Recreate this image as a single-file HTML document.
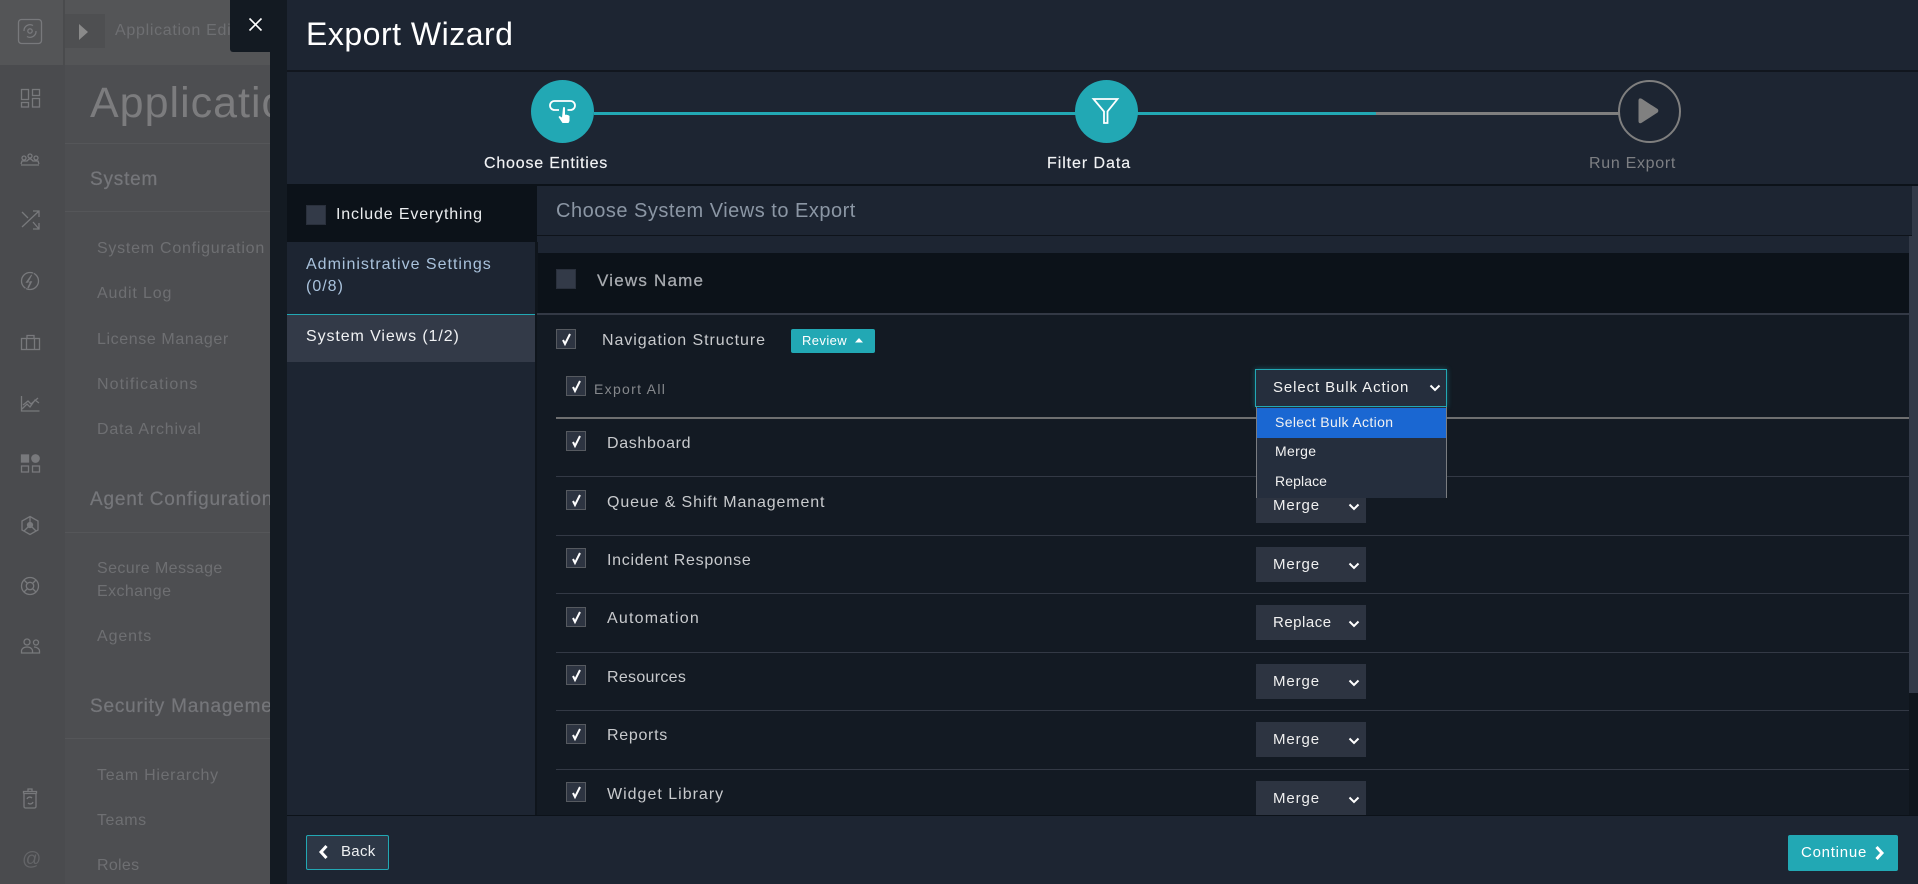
<!DOCTYPE html>
<html lang="en"><head><meta charset="utf-8"><title>Export Wizard</title>
<style>
html,body{margin:0;padding:0;width:1918px;height:884px;overflow:hidden;background:#1d2532}
body{position:relative;font-family:"Liberation Sans",sans-serif;font-size:16px;letter-spacing:.85px;color:#d9dbde}
div,span.t,svg.a{position:absolute}
.t{position:absolute;white-space:nowrap;line-height:20px;margin-top:1px}
.bg{color:#6e6f72;letter-spacing:.7px}
.h{color:#75767a;font-size:19px;letter-spacing:.8px;left:90px;-webkit-text-stroke:.25px #75767a}
.l{left:97px}
.ln{background:#555659;height:1px;left:65px;width:205px}
.cb{width:18px;height:18px;background:#2d3441;border:1px solid #565a60}
.cb svg{position:absolute;left:3px;top:2px}
.e{background:#333a48;border-color:#2a303c}
.row{left:607px;color:#c8cacd}
.sep{left:556px;width:1353px;height:1px;background:#333945}
.sel{left:1256px;width:110px;height:35px;background:#2d3441}
.sel .t{left:17px;top:7px;font-size:15px;color:#f0f0f0;letter-spacing:.9px}
.sel svg{position:absolute;left:92px;top:15px}
.opt{left:1275px;font-size:14px;letter-spacing:.35px;color:#f2f2f2}
.lab{font-size:16px;color:#f2f3f5;-webkit-text-stroke:.15px}
</style></head><body>

<!-- dimmed application behind -->
<div style="left:0;top:0;width:270px;height:884px;background:#4d4e51;overflow:hidden">
  <div style="left:0;top:0;width:65px;height:884px;background:#4a4b4e"></div>
  <div style="left:0;top:0;width:270px;height:65px;background:#545557"></div>
  <div style="left:63px;top:0;width:2px;height:65px;background:#4a4b4d"></div>
  <div style="left:65px;top:14px;width:40px;height:34px;background:#4e4f51"></div>
  <svg class="a" style="left:78px;top:23px" width="12" height="18"><path d="M1 1 L10 9 L1 17Z" fill="#8a8a8a"/></svg>
  <span class="t bg" style="left:115px;top:20px">Application Editor</span>
  <span class="t" style="left:90px;top:77px;font-size:43px;line-height:50px;letter-spacing:1px;color:#7c7c7e">Application</span>
  <div class="ln" style="top:143px"></div>
  <span class="t h" style="top:169px">System</span>
  <div class="ln" style="top:211px"></div>
  <span class="t bg l" style="top:238px;letter-spacing:.75px">System Configuration</span>
  <span class="t bg l" style="top:283px;letter-spacing:.85px">Audit Log</span>
  <span class="t bg l" style="top:329px;letter-spacing:.6px">License Manager</span>
  <span class="t bg l" style="top:374px;letter-spacing:1.1px">Notifications</span>
  <span class="t bg l" style="top:419px;letter-spacing:.8px">Data Archival</span>
  <span class="t h" style="top:489px">Agent Configuration</span>
  <div class="ln" style="top:532px"></div>
  <span class="t bg l" style="top:558px;letter-spacing:.4px">Secure Message</span>
  <span class="t bg l" style="top:581px;letter-spacing:.4px">Exchange</span>
  <span class="t bg l" style="top:626px;letter-spacing:.9px">Agents</span>
  <span class="t h" style="top:696px">Security Management</span>
  <div class="ln" style="top:738px"></div>
  <span class="t bg l" style="top:765px">Team Hierarchy</span>
  <span class="t bg l" style="top:810px;letter-spacing:.5px">Teams</span>
  <span class="t bg l" style="top:855px;letter-spacing:.3px">Roles</span>

  <!-- rail icons -->
  <svg class="a" style="left:0;top:0" width="65" height="884" fill="none" stroke="#78797c" stroke-width="1.3">
    <rect x="18.5" y="19.5" width="23" height="24" rx="3"/>
    <circle cx="30" cy="31" r="2.2"/><path d="M24 31a6 6 0 0 1 9-5.5M36 31a6 6 0 0 1-9 5.5"/>
    <rect x="21.5" y="89.5" width="7" height="10"/><rect x="32.5" y="89.5" width="7" height="6"/><rect x="21.5" y="102.5" width="7" height="4.5"/><rect x="32.5" y="98.5" width="7" height="8.5"/>
    <circle cx="24" cy="158" r="2"/><circle cx="30" cy="156" r="2"/><circle cx="36" cy="158" r="2"/><path d="M21 164l1-3h5l2-2h2l2 2h5l1 3M21 165h18"/>
    <path d="M22 227l17-16M33 211h6v6M22 212l6 6M33 222l6 7M39 223v6h-6"/>
    <circle cx="30" cy="281" r="8.5"/><path d="M32 275l-5 7h4l-3 6" stroke-width="1.6"/><path d="M35 270l-11 22" stroke="#4a4b4e" stroke-width=".8"/>
    <rect x="21.5" y="338.5" width="18" height="11"/><path d="M26.5 349.500v-11M34.500 349.500v-11M27 338.500v-3h7v3"/>
    <path d="M21.500 396v15h18M22 409l5-5 3 3 5-7 4 3M23 405l5-4 3 3 7-6"/>
    <rect x="21.500" y="455" width="7" height="7" fill="#78797c"/><circle cx="35.500" cy="458.500" r="3.700" fill="#78797c"/><rect x="21.500" y="466" width="7" height="6"/><rect x="32.500" y="466" width="7" height="6"/>
    <path d="M30 516.500l8 4.500v9l-8 4.500-8-4.500v-9z"/><circle cx="30" cy="525" r="2.500" fill="#78797c"/><path d="M30 517v6M24 531l4-4M36 531l-4-4"/>
    <circle cx="30" cy="586" r="8.500"/><circle cx="30" cy="586" r="3.700"/><path d="M24 580l3.500 3.500M36 580l-3.500 3.500M24 592l3.500-3.500M36 592l-3.500-3.500"/>
    <circle cx="27" cy="642" r="3"/><circle cx="36" cy="642.500" r="2.500"/><path d="M21.500 653v-2c0-2 2-4 5.500-4s5.500 2 5.500 4v2zM34 647c3 0 5.500 2 5.500 4v2H33"/>
    <path d="M24 793.500h12v13a1.500 1.500 0 0 1-1.500 1.500h-9a1.500 1.500 0 0 1-1.500-1.500zM23.500 793.500v-2h13v2M28 791v-2h4v2"/><path d="M27 799a3 3 0 0 1 5-1M33 802a3 3 0 0 1-5 1"/>
  </svg>
  <span class="t" style="left:22px;top:849px;font-size:19px;letter-spacing:0;color:#646568">@</span>
</div>

<!-- close tab + side strip -->
<div style="left:230px;top:0;width:40px;height:52px;background:#131a22;border-bottom-left-radius:3px"></div>
<div style="left:270px;top:0;width:17px;height:884px;background:#131a22"></div>
<svg class="a" style="left:248px;top:17px" width="15" height="15" fill="none" stroke="#fff" stroke-width="1.6"><path d="M1.500 1.500l12 12M13.500 1.500l-12 12"/></svg>

<!-- wizard -->
<div style="left:287px;top:0;width:1631px;height:884px;background:#1d2532"></div>
<span class="t" style="left:306px;top:13px;font-size:32px;line-height:40px;letter-spacing:.5px;color:#fff">Export Wizard</span>
<div style="left:287px;top:70px;width:1631px;height:2px;background:#11161e"></div>

<!-- stepper -->
<div style="left:594px;top:112px;width:782px;height:3px;background:#22a8b4"></div>
<div style="left:1376px;top:112px;width:243px;height:3px;background:#7f7f7f"></div>
<div style="left:531px;top:80px;width:63px;height:63px;border-radius:50%;background:#22a8b4"></div>
<div style="left:1075px;top:80px;width:63px;height:63px;border-radius:50%;background:#22a8b4"></div>
<div style="left:1618px;top:80px;width:59px;height:59px;border-radius:50%;border:2px solid #7f7f7f"></div>
<svg class="a" style="left:531px;top:80px" width="63" height="63" fill="none" stroke="#fff">
  <path d="M28 30h-4.500a4.500 4.500 0 0 1 0-9h16a4.500 4.500 0 0 1 0 9h-3" stroke-width="1.800"/>
  <path transform="translate(2,0)" d="M30 28a1 1 0 0 1 2 0v7l1-.5 1 .5 1 0 1.500 1v5l-1 2h-6l-4-6 1-1 2.500 1.500z" fill="#fff" stroke="none"/>
</svg>
<svg class="a" style="left:1075px;top:80px" width="63" height="63" fill="none" stroke="#fff" stroke-width="1.800">
  <path d="M18.500 19h24l-10 12.500V43h-3.500V31.500z" stroke-linejoin="miter"/>
</svg>
<svg class="a" style="left:1618px;top:80px" width="63" height="63"><path d="M20.500 20.500c0-2 1.500-2.700 3.200-1.700l15.500 10c1.500 1 1.500 3 0 4l-15.500 10c-1.700 1-3.200.3-3.200-1.700z" fill="#808080"/></svg>
<span class="t lab" style="left:484px;top:153px;letter-spacing:.8px">Choose Entities</span>
<span class="t lab" style="left:1047px;top:153px;letter-spacing:.93px">Filter Data</span>
<span class="t lab" style="left:1589px;top:153px;letter-spacing:.7px;color:#7d7f83;-webkit-text-stroke:0">Run Export</span>
<div style="left:287px;top:184px;width:1631px;height:2px;background:#0c1219"></div>

<!-- left nav -->
<div style="left:287px;top:186px;width:250px;height:56px;background:#0c1219"></div>
<div class="cb e" style="left:306px;top:205px"></div>
<span class="t" style="left:336px;top:204px;color:#eceef0;letter-spacing:.85px">Include Everything</span>
<span class="t" style="left:306px;top:254px;color:#a9c2dc;letter-spacing:1px">Administrative Settings</span>
<span class="t" style="left:306px;top:276px;color:#a9c2dc;letter-spacing:1px">(0/8)</span>
<div style="left:287px;top:314px;width:248px;height:1px;background:#22a8b4"></div>
<div style="left:287px;top:315px;width:248px;height:47px;background:#333a48"></div>
<span class="t" style="left:306px;top:326px;color:#f0f1f3;letter-spacing:.9px">System Views (1/2)</span>

<!-- right panel -->
<div style="left:535px;top:242px;width:3px;height:573px;background:#0f151c"></div>
<div style="left:537px;top:186px;width:1375px;height:49px;background:#1d2532"></div>
<div style="left:537px;top:235px;width:1375px;height:1px;background:#0e131a"></div>
<span class="t" style="left:556px;top:200px;font-size:20px;letter-spacing:.5px;color:#8b96a4">Choose System Views to Export</span>

<div style="left:538px;top:253px;width:1371px;height:60px;background:#0c1219"></div>
<div style="left:537px;top:313px;width:1372px;height:502px;background:#131a23;overflow:hidden"></div>
<div style="left:537px;top:313px;width:1372px;height:2px;background:#333945"></div>
<div class="cb e" style="left:556px;top:269px"></div>
<span class="t" style="left:597px;top:270px;font-size:17px;letter-spacing:1.2px;color:#a8abb0;-webkit-text-stroke:.25px #a8abb0">Views Name</span>

<div class="cb" style="left:556px;top:329px"><svg width="13" height="15"><path d="M3 8l2 4 5-10" fill="none" stroke="#fff" stroke-width="2"/></svg></div>
<span class="t" style="left:602px;top:330px;color:#c8cacd;letter-spacing:.95px">Navigation Structure</span>
<div style="left:791px;top:329px;width:84px;height:24px;background:#22a8b4;border-radius:2px"></div>
<span class="t" style="left:802px;top:330px;font-size:13px;letter-spacing:.4px;color:#fff">Review</span>
<svg class="a" style="left:854px;top:336px" width="10" height="8"><path d="M1 6.500L5 2l4 4.500z" fill="#fff"/></svg>

<div class="cb" style="left:566px;top:376px"><svg width="13" height="15"><path d="M3 8l2 4 5-10" fill="none" stroke="#fff" stroke-width="2"/></svg></div>
<span class="t" style="left:594px;top:378px;font-size:14px;letter-spacing:1.3px;color:#85888c">Export All</span>
<div style="left:556px;top:417px;width:1353px;height:2px;background:#6e6f70"></div>

<div class="cb" style="left:566px;top:431px"><svg width="13" height="15"><path d="M3 8l2 4 5-10" fill="none" stroke="#fff" stroke-width="2"/></svg></div>
<span class="t row" style="left:607px;top:433px;letter-spacing:.66px">Dashboard</span>
<div class="sep" style="top:476px"></div>

<div class="cb" style="left:566px;top:490px"><svg width="13" height="15"><path d="M3 8l2 4 5-10" fill="none" stroke="#fff" stroke-width="2"/></svg></div>
<span class="t row" style="top:492px;letter-spacing:.87px">Queue &amp; Shift Management</span>
<div class="sel" style="top:488px"><span class="t">Merge</span><svg width="12" height="8"><path d="M1.500 1.500L6 6l4.500-4.500" fill="none" stroke="#fff" stroke-width="2"/></svg></div>
<div class="sep" style="top:535px"></div>

<div class="cb" style="left:566px;top:548px"><svg width="13" height="15"><path d="M3 8l2 4 5-10" fill="none" stroke="#fff" stroke-width="2"/></svg></div>
<span class="t row" style="top:550px;letter-spacing:.7px">Incident Response</span>
<div class="sel" style="top:547px"><span class="t">Merge</span><svg width="12" height="8"><path d="M1.500 1.500L6 6l4.500-4.500" fill="none" stroke="#fff" stroke-width="2"/></svg></div>
<div class="sep" style="top:593px"></div>

<div class="cb" style="left:566px;top:607px"><svg width="13" height="15"><path d="M3 8l2 4 5-10" fill="none" stroke="#fff" stroke-width="2"/></svg></div>
<span class="t row" style="top:608px;letter-spacing:1.2px">Automation</span>
<div class="sel" style="top:605px"><span class="t" style="letter-spacing:.5px">Replace</span><svg width="12" height="8"><path d="M1.500 1.500L6 6l4.500-4.500" fill="none" stroke="#fff" stroke-width="2"/></svg></div>
<div class="sep" style="top:652px"></div>

<div class="cb" style="left:566px;top:665px"><svg width="13" height="15"><path d="M3 8l2 4 5-10" fill="none" stroke="#fff" stroke-width="2"/></svg></div>
<span class="t row" style="top:667px;letter-spacing:.3px">Resources</span>
<div class="sel" style="top:664px"><span class="t">Merge</span><svg width="12" height="8"><path d="M1.500 1.500L6 6l4.500-4.500" fill="none" stroke="#fff" stroke-width="2"/></svg></div>
<div class="sep" style="top:710px"></div>

<div class="cb" style="left:566px;top:724px"><svg width="13" height="15"><path d="M3 8l2 4 5-10" fill="none" stroke="#fff" stroke-width="2"/></svg></div>
<span class="t row" style="top:725px;letter-spacing:.7px">Reports</span>
<div class="sel" style="top:722px"><span class="t">Merge</span><svg width="12" height="8"><path d="M1.500 1.500L6 6l4.500-4.500" fill="none" stroke="#fff" stroke-width="2"/></svg></div>
<div class="sep" style="top:769px"></div>

<div class="cb" style="left:566px;top:782px"><svg width="13" height="15"><path d="M3 8l2 4 5-10" fill="none" stroke="#fff" stroke-width="2"/></svg></div>
<span class="t row" style="top:784px;letter-spacing:1px">Widget Library</span>
<div class="sel" style="top:781px;height:34px"><span class="t">Merge</span><svg width="12" height="8"><path d="M1.500 1.500L6 6l4.500-4.500" fill="none" stroke="#fff" stroke-width="2"/></svg></div>

<!-- bulk select -->
<div style="left:1255px;top:369px;width:190px;height:36px;background:#252e3d;border:1px solid #22a8b4;box-shadow:0 0 5px rgba(34,168,180,.45)"></div>
<span class="t" style="left:1273px;top:377px;font-size:15px;letter-spacing:.9px;color:#f2f2f2">Select Bulk Action</span>
<svg class="a" style="left:1429px;top:384px" width="12" height="8"><path d="M1.500 1.500L6 6l4.500-4.500" fill="none" stroke="#fff" stroke-width="2"/></svg>
<div style="left:1256px;top:407px;width:189px;height:91px;background:#252e3d;border:solid #7a7c80;border-width:0 1px"></div>
<div style="left:1257px;top:408px;width:189px;height:30px;background:#1a67d2"></div>
<span class="t opt" style="top:411px">Select Bulk Action</span>
<span class="t opt" style="top:440px">Merge</span>
<span class="t opt" style="top:470px;letter-spacing:.1px">Replace</span>

<!-- scrollbar -->
<div style="left:1912px;top:186px;width:6px;height:50px;background:#333a48"></div>
<div style="left:1909px;top:236px;width:9px;height:457px;background:#333a48"></div>
<div style="left:1909px;top:693px;width:9px;height:122px;background:#0f151c"></div>

<!-- footer -->
<div style="left:287px;top:815px;width:1631px;height:1px;background:#0c1219"></div>
<div style="left:306px;top:835px;width:81px;height:33px;background:#2d3746;border:1px solid #22a8b4;border-radius:2px"></div>
<svg class="a" style="left:318px;top:844px" width="11" height="16"><path d="M8.500 2L3 8l5.500 6" fill="none" stroke="#fff" stroke-width="3"/></svg>
<span class="t" style="left:341px;top:841px;font-size:15px;letter-spacing:.3px;color:#eef0f2">Back</span>
<div style="left:1788px;top:835px;width:110px;height:36px;background:#22a8b4;border-radius:2px"></div>
<span class="t" style="left:1801px;top:842px;font-size:15px;letter-spacing:.75px;color:#fff">Continue</span>
<svg class="a" style="left:1874px;top:845px" width="11" height="16"><path d="M2.500 2L8 8l-5.500 6" fill="none" stroke="#fff" stroke-width="3"/></svg>
</body></html>
